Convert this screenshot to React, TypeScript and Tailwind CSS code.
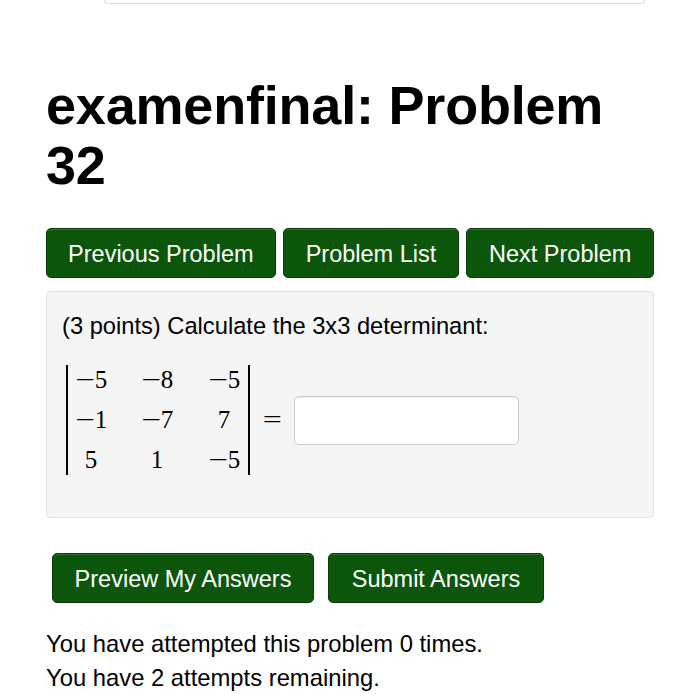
const sans = { fontFamily: '"Liberation Sans", Arial, sans-serif' };
const serif = { fontFamily: '"Liberation Serif", "Times New Roman", serif' };

const matrix = [
  ['-5', '-8', '-5'],
  ['-1', '-7', '7'],
  ['5', '1', '-5'],
];

function Entry({ v }: { v: string }) {
  const neg = v.startsWith('-');
  return (
    <span className="whitespace-nowrap">
      {neg && <span className="inline-block origin-center scale-x-[1.4] px-[3px]">−</span>}
      {neg ? v.slice(1) : v}
    </span>
  );
}

function GreenButton({ label, className = '' }: { label: string; className?: string }) {
  return (
    <button
      type="button"
      className={`flex h-[50px] items-center justify-center rounded-[5px] border border-[#0a3d0a] bg-[#0b560b] px-[20px] pt-[3px] text-[23.5px] leading-none text-white shadow-[inset_0_1px_0_rgba(255,255,255,0.15)] ${className}`}
    >
      {label}
    </button>
  );
}

export default function App() {
  return (
    <div className="min-h-[694px] w-[700px] bg-white text-black" style={sans}>
      <div className="ml-[104px] h-[4px] w-[541px] rounded-b-[5px] border-x border-b border-[#dcdcdc]" />

      <div className="px-[46px]">
        <h1 className="mt-[71px] text-[54px] font-bold leading-[60px] tracking-[-0.2px]">
          examenfinal: Problem 32
        </h1>

        <div className="mt-[33px] flex gap-[7px]">
          <GreenButton label="Previous Problem" className="w-[230px]" />
          <GreenButton label="Problem List" className="w-[177px]" />
          <GreenButton label="Next Problem" className="w-[188px]" />
        </div>

        <div className="mt-[13px] h-[227px] rounded-[4px] border border-[#e3e3e3] bg-[#f5f5f5] px-[15px] pt-[19px]">
          <p className="text-[23.7px] leading-[30px]">(3 points) Calculate the 3x3 determinant:</p>

          <div className="mt-[24px] flex items-center">
            <div className="ml-[4px] flex h-[110px] items-center border-x-2 border-black" style={serif}>
              <div className="grid grid-cols-[46px_86px_48px] justify-items-center text-[25px] leading-[40px]">
                {matrix.flat().map((v, i) => (
                  <Entry key={i} v={v} />
                ))}
              </div>
            </div>
            <span className="ml-[15px] inline-block scale-x-[1.3] text-[26px] leading-none" style={serif}>
              =
            </span>
            <input
              type="text"
              className="ml-[14px] h-[49px] w-[225px] rounded-[5px] border border-[#cccccc] bg-white shadow-[inset_0_1px_1px_rgba(0,0,0,0.075)]"
            />
          </div>
        </div>

        <div className="ml-[6px] mt-[35px] flex gap-[14px]">
          <GreenButton label="Preview My Answers" className="w-[262px]" />
          <GreenButton label="Submit Answers" className="w-[216px]" />
        </div>

        <div className="mt-[24px] text-[23.8px] leading-[34px]">
          <p>You have attempted this problem 0 times.</p>
          <p>You have 2 attempts remaining.</p>
        </div>
      </div>
    </div>
  );
}
